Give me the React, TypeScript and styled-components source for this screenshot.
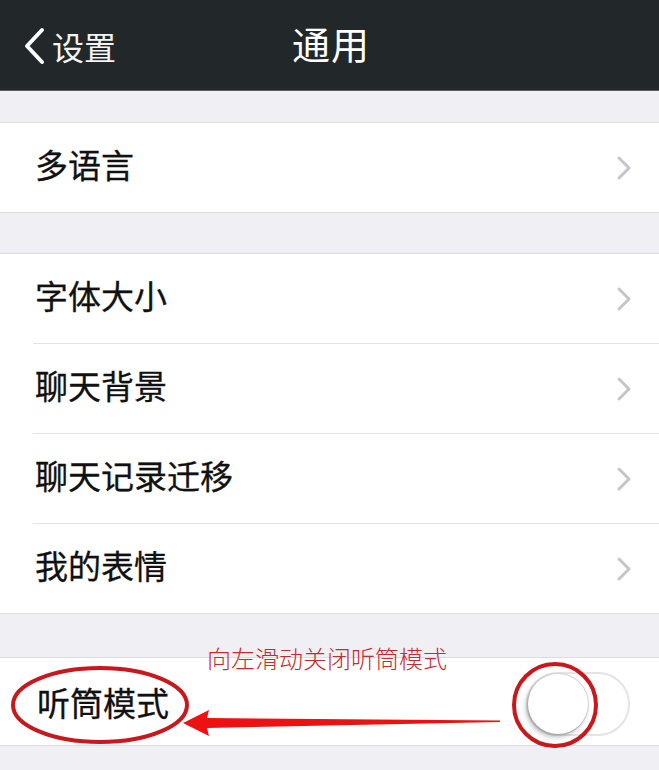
import styled, { createGlobalStyle } from "styled-components"

const GlobalStyle = createGlobalStyle`
  html, body {
    margin: 0;
    padding: 0;
    background: #efeff4;
    font-family: "Noto Sans CJK SC", "Noto Sans", sans-serif;
  }
`;

interface RowProps {
  label: string,
  last?: boolean
}

const Chevron = () => (
  <svg width="16" height="26" viewBox="0 0 16 26">
    <polyline points="3,3 13,13 3,23" fill="none" stroke="#c5c5ca" strokeWidth="3" strokeLinecap="round" strokeLinejoin="round" />
  </svg>
)

const Row = ({label, last}: RowProps) => (
  <RowItem>
    <RowInner $last={last}>
      <Label $lift={8}>{label}</Label>
      <Chevron />
    </RowInner>
  </RowItem>
)

// red markup drawn over the earpiece row
const Markup = () => (
  <>
    <Hint>向左滑动关闭听筒模式</Hint>
    <MarkupSvg width="659" height="100" viewBox="0 0 659 100">
      <ellipse cx="100" cy="47" rx="87" ry="37" fill="none" stroke="#c8181d" strokeWidth="4" />
      <ellipse cx="555" cy="47" rx="41" ry="41" fill="none" stroke="#c8181d" strokeWidth="4" />
      <polygon points="183,65 209,52 207,60 500,62.5 500,64 207,70 209,78" fill="#ee1111" />
    </MarkupSvg>
  </>
)

export default function App() {
  return (
    <Screen>
      <GlobalStyle />
      <NavBar>
        <Back>
          <svg width="24" height="38" viewBox="0 0 24 38">
            <polyline points="20,3 5,19 20,35" fill="none" stroke="#fff" strokeWidth="4" strokeLinecap="round" strokeLinejoin="round" />
          </svg>
          <span>设置</span>
        </Back>
        <Title>通用</Title>
      </NavBar>

      <Group $gap={31}>
        <Row label="多语言" last />
      </Group>

      <Group $gap={40}>
        <Row label="字体大小" />
        <Row label="聊天背景" />
        <Row label="聊天记录迁移" />
        <Row label="我的表情" last />
      </Group>

      <Group $gap={43}>
        <SwitchRow>
          <Label $lift={0}>听筒模式</Label>
          <Track>
            <Knob />
          </Track>
          <Markup />
        </SwitchRow>
      </Group>
      <Footer />
    </Screen>
  )
}

const Screen = styled.div`
  width: 659px;
  min-height: 770px;
  background: #efeff4;
  overflow: hidden;
`;

const NavBar = styled.header`
  position: relative;
  height: 90px;
  background: #222829;
  border-bottom: 1px solid #5a5e60;
  display: flex;
  align-items: center;
  justify-content: center;
  color: #fff;
`;

const Back = styled.div`
  position: absolute;
  left: 22px;
  top: 26px;
  display: flex;
  align-items: center;
  gap: 6px;
  font-size: 32px;
  line-height: 40px;
  color: #f4f4f4;
`;

const Title = styled.h1`
  margin: 0;
  font-size: 38px;
  font-weight: 400;
  line-height: 44px;
  letter-spacing: 1px;
  margin-left: 3px;
  margin-top: -4px;
`;

const Group = styled.section<{ $gap: number }>`
  margin-top: ${p => p.$gap}px;
  background: #fff;
  border-top: 1px solid #dcdcdf;
  border-bottom: 1px solid #dcdcdf;
`;

const RowItem = styled.div`
  padding-left: 33px;
`;

const RowInner = styled.div<{ $last?: boolean }>`
  height: 89px;
  display: flex;
  align-items: center;
  justify-content: space-between;
  padding-right: 27px;
  border-bottom: ${p => p.$last ? "none" : "1px solid #e3e3e6"};
`;

const Label = styled.span<{ $lift: number }>`
  font-size: 33px;
  font-weight: 400;
  line-height: 40px;
  padding-bottom: ${p => p.$lift}px;
  color: #111;
  padding-left: 2px;
  -webkit-text-stroke: 0.3px #111;
`;

const SwitchRow = styled.div`
  position: relative;
  height: 87px;
  display: flex;
  align-items: center;
  justify-content: space-between;
  padding: 0 29px 0 35px;
`;

const Track = styled.div`
  width: 104px;
  height: 64px;
  border-radius: 32px;
  border: 2px solid #e4e4e6;
  box-sizing: border-box;
  background: #fff;
  display: flex;
  align-items: center;
  margin-top: 4px;
`;

const Knob = styled.div`
  width: 60px;
  height: 60px;
  border-radius: 50%;
  background: #fff;
  box-shadow: -2px 3px 5px rgba(0, 0, 0, 0.28), 0 0 0 1px #d8d8da;
`;

const Hint = styled.div`
  position: absolute;
  left: 207px;
  top: -15px;
  font-size: 24px;
  line-height: 30px;
  color: #c92a2e;
  font-weight: 300;
  pointer-events: none;
`;

const MarkupSvg = styled.svg`
  position: absolute;
  left: 0;
  top: 0;
  overflow: visible;
  pointer-events: none;
`;

const Footer = styled.div`
  height: 30px;
`;
